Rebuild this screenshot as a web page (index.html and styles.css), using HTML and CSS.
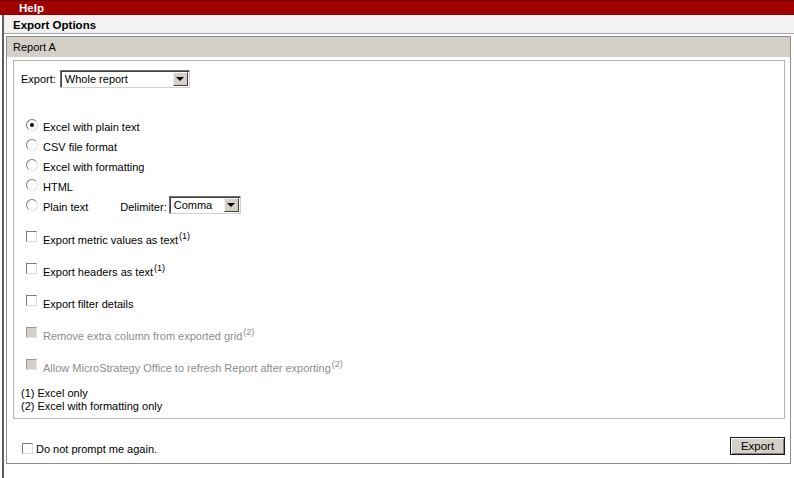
FILE: index.html
```html
<!DOCTYPE html>
<html>
<head>
<meta charset="utf-8">
<title>Export Options</title>
<link rel="stylesheet" href="styles.css">
</head>
<body>
<div class="topbar">Help</div>
<div class="main">
  <div class="titlebar">Export Options</div>
  <div class="panel">
    <div class="panel-head">Report A</div>
    <div class="box">
      <div class="export-row">
        <span>Export:</span>
        <div class="select select-wide"><span class="select-text">Whole report</span><span class="select-arrow"></span></div>
      </div>
      <div class="radios">
        <div class="radio-row"><span class="radio checked"></span><span>Excel with plain text</span></div>
        <div class="radio-row"><span class="radio"></span><span>CSV file format</span></div>
        <div class="radio-row"><span class="radio"></span><span>Excel with formatting</span></div>
        <div class="radio-row"><span class="radio"></span><span>HTML</span></div>
        <div class="radio-row"><span class="radio"></span><span>Plain text</span><span class="delim">Delimiter:</span><div class="select select-small"><span class="select-text">Comma</span><span class="select-arrow"></span></div></div>
      </div>
      <div class="checks">
        <div class="check-row"><span class="check"></span><span>Export metric values as text<span class="sup">(1)</span></span></div>
        <div class="check-row"><span class="check"></span><span>Export headers as text<span class="sup">(1)</span></span></div>
        <div class="check-row"><span class="check"></span><span>Export filter details</span></div>
        <div class="check-row"><span class="check disabled"></span><span class="disabled-text">Remove extra column from exported grid<span class="sup">(2)</span></span></div>
        <div class="check-row"><span class="check disabled"></span><span class="disabled-text">Allow MicroStrategy Office to refresh Report after exporting<span class="sup">(2)</span></span></div>
      </div>
      <div class="notes">
        <div>(1) Excel only</div>
        <div>(2) Excel with formatting only</div>
      </div>
    </div>
    <div class="footer">
      <div class="prompt"><span class="check"></span><span>Do not prompt me again.</span></div>
      <div class="btn">Export</div>
    </div>
  </div>
</div>
</body>
</html>
```
FILE: styles.css
```css
* { box-sizing: border-box; }
html, body { margin: 0; padding: 0; }
body {
  width: 794px;
  height: 478px;
  overflow: hidden;
  background: #fff;
  font-family: "Liberation Sans", Arial, sans-serif;
  font-size: 11px;
  color: #000;
}
.topbar {
  height: 15px;
  background: #a30000;
  border-top: 1px solid #6a0000;
  color: #fff;
  font-weight: bold;
  font-size: 11.5px;
  line-height: 13px;
  padding: 1px 0 0 19px;
}
.main {
  margin-left: 2px;
  border-left: 2px solid #5e5e5e;
  height: 463px;
}
.titlebar {
  height: 19px;
  background: #f2f2f2;
  border-bottom: 1px solid #a6a6a6;
  font-weight: bold;
  font-size: 11.5px;
  line-height: 15px;
  padding: 3px 0 0 9px;
}
.panel {
  margin: 2px 3px 0 2px;
  border: 1px solid #8c8c8c;
  padding-bottom: 8px;
}
.panel-head {
  height: 20px;
  background: #d4d0c8;
  padding: 1px 0 0 6px;
  line-height: 19px;
}
.box {
  margin: 3px 5px 0 6px;
  border: 1px solid #b4b4b4;
  padding: 9px 7px 5px 7px;
}
.export-row {
  display: flex;
  align-items: center;
  height: 18px;
  gap: 4px;
}
.select {
  display: flex;
  align-items: center;
  height: 18px;
  border: 1px solid;
  border-color: #707070 #d0d0d0 #d0d0d0 #707070;
  box-shadow: inset 1px 1px 0 #404040;
  padding: 1px 1px 1px 4px;
  background: #fff;
  flex: none;
}
.select-wide { width: 130px; }
.select-small { width: 72px; align-self: flex-start; margin-top: -1px; }
.select-text { flex: 1; line-height: 14px; }
.select-arrow {
  width: 15px;
  height: 14px;
  background: #d4d0c8;
  border: 1px solid;
  border-color: #f4f4f4 #404040 #404040 #f4f4f4;
  display: flex;
  align-items: center;
  justify-content: center;
}
.select-arrow::after {
  content: "";
  width: 0;
  height: 0;
  border-left: 4px solid transparent;
  border-right: 4px solid transparent;
  border-top: 4px solid #000;
}
.radios {
  margin: 29px 0 0 5px;
}
.radio-row {
  display: flex;
  align-items: flex-start;
  height: 20px;
  line-height: 20px;
}
.radio {
  width: 12px;
  height: 12px;
  margin: 2px 5px 0 0;
  border-radius: 50%;
  border: 1px solid;
  border-color: #7c7c7c #e2e2e2 #e2e2e2 #7c7c7c;
  background: #fff;
  display: flex;
  align-items: center;
  justify-content: center;
  flex: none;
}
.radio.checked::after {
  content: "";
  width: 4px;
  height: 4px;
  border-radius: 50%;
  background: #000;
}
.delim { margin: 0 2px 0 32px; }
.checks {
  margin: 16px 0 0 5px;
  display: flex;
  flex-direction: column;
  gap: 18px;
}
.check-row {
  display: flex;
  align-items: flex-start;
  height: 14px;
  line-height: 14px;
}
.check {
  width: 11px;
  height: 11px;
  margin: -2px 6px 0 0;
  border: 1px solid;
  border-color: #7c7c7c #dcdcdc #dcdcdc #7c7c7c;
  background: #fff;
  flex: none;
}
.check.disabled {
  background: #d4d0c8;
  border-color: #9a9a9a #e6e6e6 #e6e6e6 #9a9a9a;
}
.disabled-text { color: #8c8c8c; }
.sup {
  font-size: 9px;
  vertical-align: 5px;
  line-height: 0;
  margin-left: 1px;
}
.notes {
  margin-top: 12px;
  line-height: 13px;
}
.footer {
  margin: 18px 5px 0 15px;
  display: flex;
  justify-content: space-between;
  align-items: flex-start;
  height: 18px;
}
.prompt {
  display: flex;
  align-items: flex-start;
  margin-top: 5px;
  line-height: 14px;
}
.prompt .check { margin: 1px 3px 0 0; }
.btn {
  width: 55px;
  height: 18px;
  background: #d4d0c8;
  border: 1px solid #1a1a1a;
  box-shadow: inset 1px 1px 0 #fff, inset -1px -1px 0 #808080;
  font-size: 11.5px;
  line-height: 16px;
  text-align: center;
}
```
